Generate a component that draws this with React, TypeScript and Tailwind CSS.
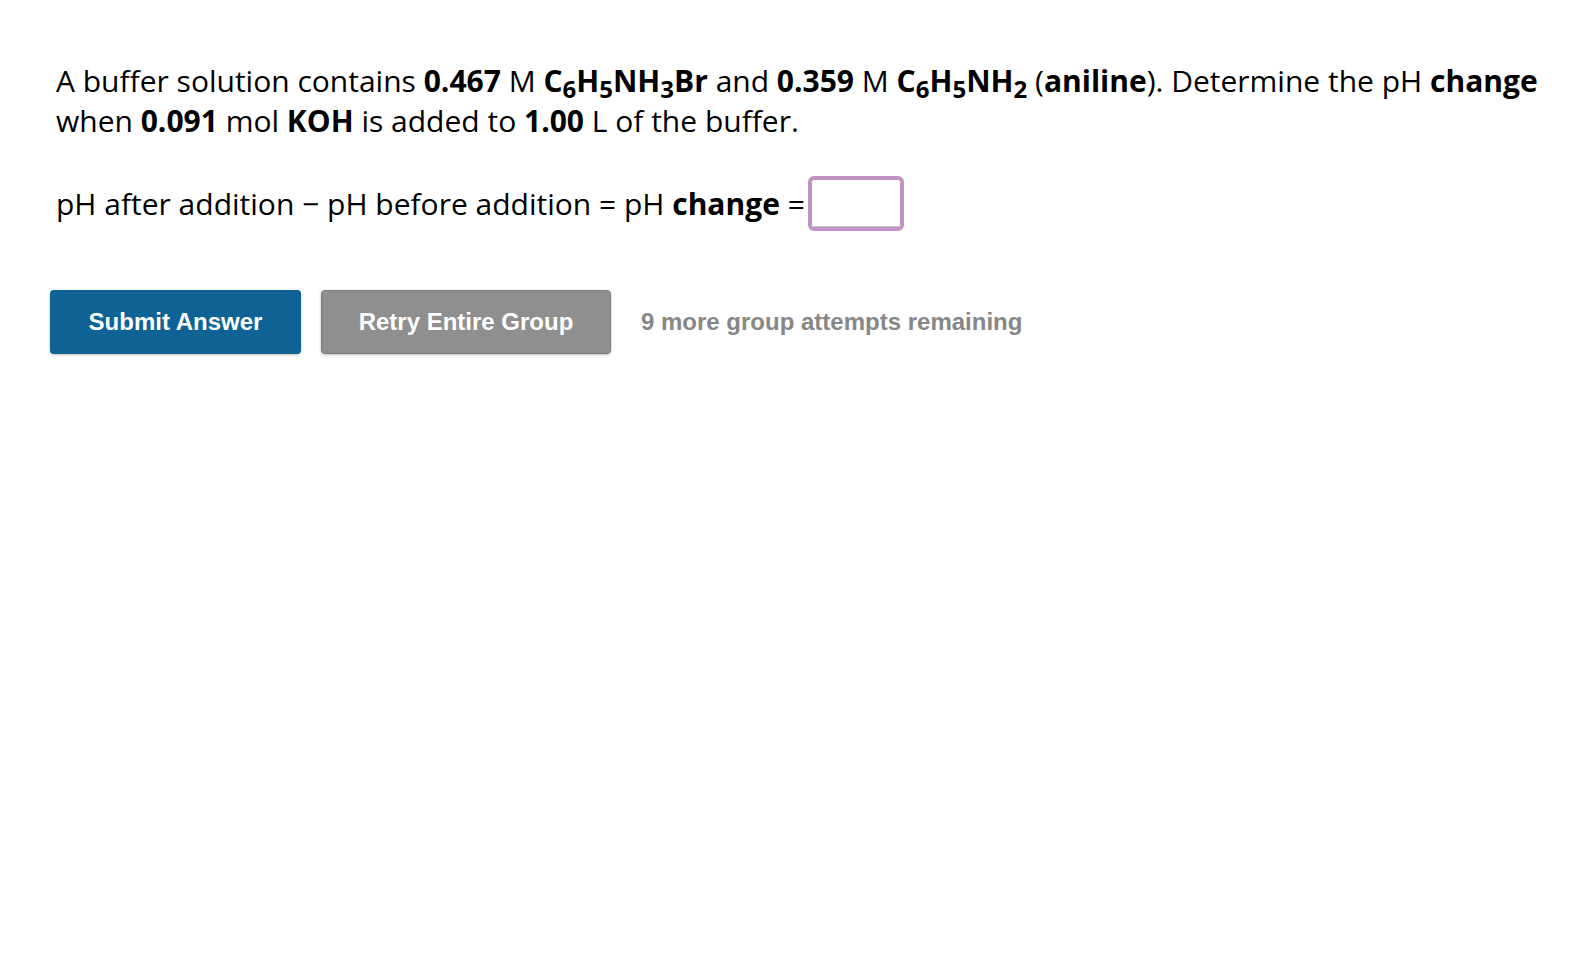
import React from "react";

function Sub({ children }: { children: React.ReactNode }) {
  return <sub className="text-[80%] leading-none">{children}</sub>;
}

export default function App() {
  return (
    <div className="min-h-screen bg-white text-black font-['Open_Sans',sans-serif]">
      <div className="pl-[56px] pr-[40px] pt-[61px]">
        <p className="text-[30px] leading-[40px]">
          A buffer solution contains <b>0.467</b> M{" "}
          <b>
            C<Sub>6</Sub>H<Sub>5</Sub>NH<Sub>3</Sub>Br
          </b>{" "}
          and <b>0.359</b> M{" "}
          <b>
            C<Sub>6</Sub>H<Sub>5</Sub>NH<Sub>2</Sub>
          </b>{" "}
          (<b>aniline</b>). Determine the pH <b>change</b> when <b>0.091</b> mol <b>KOH</b> is added to{" "}
          <b>1.00</b> L of the buffer.
        </p>

        <div className="mt-[35px] flex items-center text-[30px] leading-[40px]">
          <span>
            pH after addition − pH before addition = pH <b>change</b> =
          </span>
          <div className="ml-[3px] w-[96px] h-[55px] rounded-[6px] border-[4px] border-[#c194c4] bg-white">
            <div className="h-full border-b border-[#c4c4c4]" />
          </div>
        </div>

        <div className="mt-[59px] -ml-[6px] flex items-center font-['Liberation_Sans',Arial,sans-serif] font-bold text-[24px]">
          <button className="w-[251px] h-[64px] rounded-[4px] bg-[#0e6294] text-white shadow-[0_1px_3px_rgba(0,0,0,0.25)]">
            Submit Answer
          </button>
          <button className="ml-[20px] w-[290px] h-[64px] rounded-[4px] bg-[#8f8f8f] border border-[#7c7c7c] text-white shadow-[0_1px_3px_rgba(0,0,0,0.25)]">
            Retry Entire Group
          </button>
          <span className="ml-[30px] text-[#878787]">9 more group attempts remaining</span>
        </div>
      </div>
    </div>
  );
}
